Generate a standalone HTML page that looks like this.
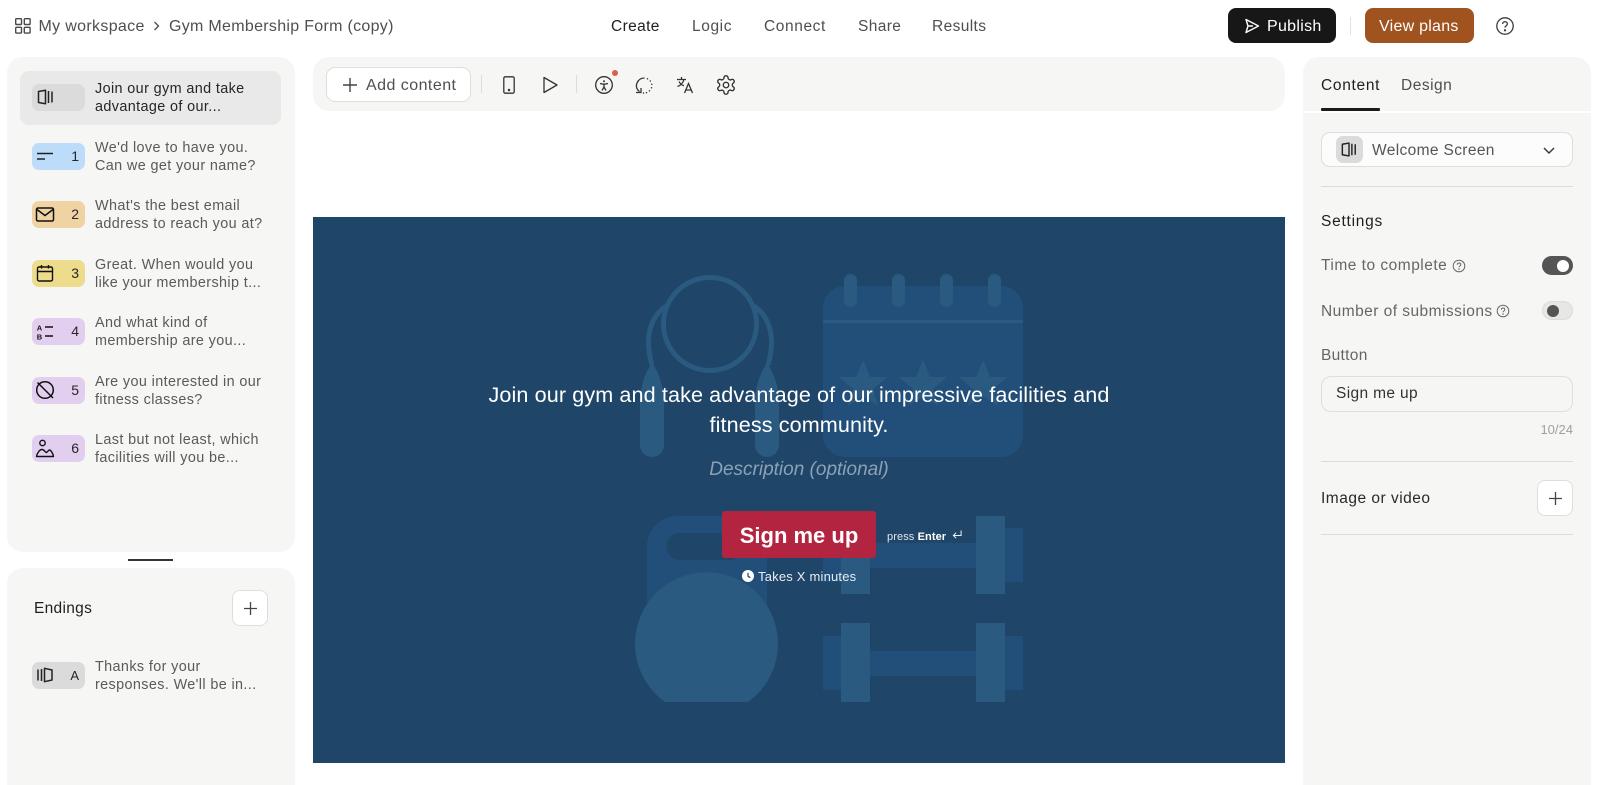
<!DOCTYPE html>
<html lang="en"><head><meta charset="utf-8"><title>Gym Membership Form</title>
<style>
*{box-sizing:border-box}
html,body{margin:0;padding:0;width:1600px;height:785px;overflow:hidden;background:#fff;font-family:"Liberation Sans",sans-serif;color:#4f4f4f}
#root{position:relative;width:1600px;height:785px;overflow:hidden}
.a{position:absolute}
.t{position:absolute;white-space:nowrap;line-height:18px}
.panel{position:absolute;background:#f6f6f5;border-radius:16px}
.badge{position:absolute;left:32px;width:53px;height:27px;border-radius:7px}
.badge svg{position:absolute;left:3px;top:2px}
.badge b{position:absolute;right:6px;top:0;line-height:27px;font-weight:400;font-size:14px;color:#262626}
.q{position:absolute;left:95px;font-size:14.4px;line-height:18px;letter-spacing:.38px;color:#5a5a5a;white-space:nowrap}
.nav{position:absolute;top:18px;font-size:15.5px;line-height:18px;letter-spacing:.38px;color:#4f4f4f;white-space:nowrap}
.btn{position:absolute;background:#fff;border:1px solid #dededc;border-radius:8px}
.hr{position:absolute;left:1321px;width:252px;height:1px;background:#dcdcda}
svg{display:block;overflow:visible}
</style></head><body><div id="root">

<svg class="a" style="left:15px;top:18px" width="16" height="16" viewBox="0 0 16 16" fill="none" stroke="#4a4a4a" stroke-width="1.4"><rect x=".7" y=".7" width="5.8" height="5.8" rx=".8"/><rect x="9.3" y=".7" width="5.8" height="5.8" rx=".8"/><rect x=".7" y="9.3" width="5.8" height="5.8" rx=".8"/><rect x="9.3" y="9.3" width="5.8" height="5.8" rx=".8"/></svg>
<div class="nav" style="left:38.5px;font-size:16px;letter-spacing:.33px">My workspace</div>
<svg class="a" style="left:153px;top:21px" width="7" height="10" viewBox="0 0 7 10" fill="none" stroke="#4a4a4a" stroke-width="1.3"><path d="M1.5 1l4 4-4 4"/></svg>
<div class="nav" style="left:169px;font-size:16px;letter-spacing:.3px">Gym Membership Form (copy)</div>

<div class="nav" style="left:611px;color:#1f1f1f">Create</div>
<div class="nav" style="left:692px;letter-spacing:.6px">Logic</div>
<div class="nav" style="left:764px;letter-spacing:.6px">Connect</div>
<div class="nav" style="left:858px">Share</div>
<div class="nav" style="left:932px">Results</div>

<div class="a" style="left:1228px;top:8px;width:108px;height:35px;background:#171717;border-radius:8px"></div>
<svg class="a" style="left:1244px;top:18px" width="16" height="16" viewBox="0 0 16 16" fill="none" stroke="#fff" stroke-width="1.4" stroke-linejoin="round"><path d="M2 1.500L14.500 8 2 14.500 4 8zM4 8h5"/></svg>
<div class="t" style="left:1267px;top:18px;font-size:16px;letter-spacing:.3px;color:#fff">Publish</div>
<div class="a" style="left:1350px;top:17px;width:1px;height:18px;background:#e2e2e0"></div>
<div class="a" style="left:1365px;top:8px;width:109px;height:35px;background:#a0521f;border-radius:8px"></div>
<div class="t" style="left:1379px;top:18px;font-size:16px;letter-spacing:.25px;color:#fff">View plans</div>
<svg class="a" style="left:1496px;top:17px" width="18" height="18" viewBox="0 0 18 18" fill="none" stroke="#3c3c3c" stroke-width="1.3"><circle cx="9" cy="9" r="8.2"/><path d="M6.600 7c0-1.400 1-2.300 2.400-2.300s2.400.9 2.400 2.200c0 1.900-2.400 1.900-2.400 3.700"/><circle cx="9" cy="13.300" r=".5" fill="#3c3c3c"/></svg>

<!-- left panel -->
<div class="panel" style="left:7px;top:57px;width:288px;height:495px"></div>
<div class="a" style="left:20px;top:71px;width:261px;height:54px;background:#e9e9e9;border-radius:9px"></div>

<div class="badge" style="top:84px;background:#dbdbdb"><svg width="22" height="22" viewBox="0 0 22 22" fill="none" stroke="#222" stroke-width="1.5"><path d="M3.500 5.500l7-1.200v13.400l-7-1.200z" stroke-linejoin="round"/><path d="M13.500 5v12M17 5.500v11"/></svg></div>
<div class="q" style="top:80px;color:#262626">Join our gym and take<br>advantage of our...</div>

<div class="badge" style="top:143px;background:#bcdcfa"><svg width="22" height="22" viewBox="0 0 22 22" fill="none" stroke="#222" stroke-width="1.4"><path d="M2 8.500h16M2 14h8"/></svg><b>1</b></div>
<div class="q" style="top:139px">We'd love to have you.<br>Can we get your name?</div>

<div class="badge" style="top:201px;background:#efd3a2"><svg width="22" height="22" viewBox="0 0 22 22" fill="none" stroke="#111" stroke-width="1.500"><rect x="1.500" y="5" width="17" height="13" rx="1.500"/><path d="M2 6.500l8 6 8-6"/></svg><b>2</b></div>
<div class="q" style="top:197px">What's the best email<br>address to reach you at?</div>

<div class="badge" style="top:260px;background:#ecdc8c"><svg width="22" height="22" viewBox="0 0 22 22" fill="none" stroke="#111" stroke-width="1.400"><rect x="2.500" y="5" width="15" height="14" rx="1.500"/><path d="M2.500 9.500h15M6.500 3v3.500M13.500 3v3.500"/></svg><b>3</b></div>
<div class="q" style="top:256px">Great. When would you<br>like your membership t...</div>

<div class="badge" style="top:318px;background:#e2cff0"><svg width="22" height="22" viewBox="0 0 22 22" fill="none" stroke="#111" stroke-width="1.400"><text x="1.800" y="10.500" font-family="Liberation Sans" font-weight="700" font-size="7.500" fill="#111" stroke="none">A</text><text x="1.800" y="19.500" font-family="Liberation Sans" font-weight="700" font-size="7.500" fill="#111" stroke="none">B</text><path d="M10 7h8M10 16h8"/></svg><b>4</b></div>
<div class="q" style="top:314px">And what kind of<br>membership are you...</div>

<div class="badge" style="top:377px;background:#e2cff0"><svg width="22" height="22" viewBox="0 0 22 22" fill="none" stroke="#111" stroke-width="1.500"><circle cx="10" cy="11" r="8.300"/><path d="M2.500 3.500l15.500 15.500"/></svg><b>5</b></div>
<div class="q" style="top:373px">Are you interested in our<br>fitness classes?</div>

<div class="badge" style="top:435px;background:#e2cff0"><svg width="22" height="22" viewBox="0 0 22 22" fill="none" stroke="#111" stroke-width="1.400" stroke-linejoin="round"><circle cx="7.500" cy="6" r="2.700"/><path d="M1.500 19.500c.5-3 3-7 5.500-7s3 3 4.500 3c1.500-1 2-2.500 3-2.500s3.500 3 4 6.500z"/></svg><b>6</b></div>
<div class="q" style="top:431px">Last but not least, which<br>facilities will you be...</div>

<div class="a" style="left:128px;top:558.500px;width:45px;height:2px;background:#333"></div>

<div class="panel" style="left:7px;top:568px;width:288px;height:240px"></div>
<div class="t" style="left:34px;top:600px;font-size:15.500px;letter-spacing:.3px;color:#1f1f1f">Endings</div>
<div class="btn" style="left:232px;top:590px;width:36px;height:36px"><svg class="a" style="left:11px;top:11px" width="13" height="13" viewBox="0 0 14 14" stroke="#444" stroke-width="1.400"><path d="M7 0v14M0 7h14"/></svg></div>
<div class="badge" style="top:662px;background:#dbdbdb"><svg width="22" height="22" viewBox="0 0 22 22" fill="none" stroke="#222" stroke-width="1.500"><path d="M3 5.500v11M6.500 5v12M9.500 4.300l7.500 1.700v10l-7.500 1.700z" stroke-linejoin="round"/></svg><b style="font-size:13px">A</b></div>
<div class="q" style="top:658px">Thanks for your<br>responses. We'll be in...</div>

<!-- toolbar -->
<div class="panel" style="left:313px;top:57px;width:972px;height:54px"></div>
<div class="btn" style="left:326px;top:67px;width:145px;height:35px;border-radius:9px"><svg class="a" style="left:16px;top:10px" width="14" height="14" viewBox="0 0 14 14" stroke="#444" stroke-width="1.400"><path d="M7 0v14M0 7h14"/></svg></div>
<div class="t" style="left:366px;top:77px;font-size:16px;letter-spacing:.46px">Add content</div>
<div class="a" style="left:481px;top:75px;width:1px;height:18px;background:#dcdcda"></div>
<div class="a" style="left:576px;top:75px;width:1px;height:18px;background:#dcdcda"></div>
<svg class="a" style="left:503px;top:76px" width="12" height="18" viewBox="0 0 12 18" fill="none" stroke="#333" stroke-width="1.300"><rect x=".8" y=".8" width="10.400" height="16.400" rx="1.500"/><circle cx="6" cy="14" r=".6" fill="#333"/></svg>
<svg class="a" style="left:543px;top:76px" width="15" height="18" viewBox="0 0 15 18" fill="none" stroke="#333" stroke-width="1.300" stroke-linejoin="round"><path d="M1 1.500l13 7.500-13 7.500z"/></svg>
<svg class="a" style="left:595px;top:76px" width="18" height="18" viewBox="0 0 18 18" fill="none" stroke="#333" stroke-width="1.300"><circle cx="9" cy="9" r="8.300"/><circle cx="9" cy="5.200" r="1" fill="#333" stroke="none"/><path d="M5 7.500l4 .8 4-.8M9 8.300v2.700M9 11l-2 3.500M9 11l2 3.500"/></svg>
<div class="a" style="left:612px;top:70px;width:6px;height:6px;border-radius:50%;background:#d9604f"></div>
<svg class="a" style="left:635px;top:76px" width="19" height="19" viewBox="0 0 19 19" fill="none" stroke="#333" stroke-width="1.300"><path d="M4.500 15.500C1.500 13.500.7 10 2 7c1.200-3 4-5 7.500-5"/><path d="M1 16.500h5V12"/><path d="M12.500 2.800h.01M15.300 5h.01M16.800 8.300h.01M16.500 11.800h.01M14.500 14.800h.01M11.500 16.600h.01M8.500 17h.01" stroke-linecap="round" stroke-width="1.500"/></svg>
<svg class="a" style="left:676px;top:76px" width="18" height="18" viewBox="0 0 18 18" fill="none" stroke="#333" stroke-width="1.300"><path d="M1 3.500h9M5.500 1v2.500M8 3.500C7 7 4.500 9.500 1.500 10.500M3 5.500c1 2 3 3.700 5 4.300"/><path d="M8.500 17L12.500 7.500 16.500 17M9.800 14h5.400"/></svg>
<svg class="a" style="left:715px;top:74px" width="22" height="22" viewBox="0 0 24 24" fill="none" stroke="#333" stroke-width="1.500"><path d="M12.220 2h-.44a2 2 0 0 0-2 2v.18a2 2 0 0 1-1 1.730l-.43.250a2 2 0 0 1-2 0l-.15-.080a2 2 0 0 0-2.730.730l-.22.380a2 2 0 0 0 .730 2.730l.150.100a2 2 0 0 1 1 1.720v.510a2 2 0 0 1-1 1.740l-.150.090a2 2 0 0 0-.730 2.730l.220.380a2 2 0 0 0 2.730.730l.150-.080a2 2 0 0 1 2 0l.430.250a2 2 0 0 1 1 1.730V20a2 2 0 0 0 2 2h.440a2 2 0 0 0 2-2v-.180a2 2 0 0 1 1-1.730l.430-.250a2 2 0 0 1 2 0l.150.080a2 2 0 0 0 2.730-.730l.220-.390a2 2 0 0 0-.730-2.730l-.150-.080a2 2 0 0 1-1-1.740v-.500a2 2 0 0 1 1-1.740l.150-.090a2 2 0 0 0 .730-2.730l-.220-.380a2 2 0 0 0-2.730-.730l-.150.080a2 2 0 0 1-2 0l-.430-.250a2 2 0 0 1-1-1.730V4a2 2 0 0 0-2-2z"/><circle cx="12" cy="12" r="3"/></svg>

<!-- canvas -->
<div class="a" style="left:313px;top:217px;width:972px;height:546px;background:#1f4568;overflow:hidden">
<svg class="a" style="left:-313px;top:-217px" width="1600" height="785" viewBox="0 0 1600 785" fill="none">
  <g stroke="#2a5a80" stroke-width="5">
    <circle cx="710" cy="324" r="46.500"/>
    <path d="M666 306C654 314 648.500 328 648.500 342C648.500 350 650 358 652 365M754 306C766 314 771.500 328 771.500 342C771.500 350 770 358 768 365"/>
  </g>
  <path d="M652 363c7 10 12 24 12 38v44a12 12 0 0 1-24 0v-44c0-14 5-28 12-38zM767 363c7 10 12 24 12 38v44a12 12 0 0 1-24 0v-44c0-14 5-28 12-38z" fill="#2a5a80"/>
  <rect x="823" y="286" width="200" height="171" rx="22" fill="#214f7a"/>
  <rect x="823" y="320" width="200" height="3" fill="#2a5a80"/>
  <g fill="#2a5a80"><rect x="844" y="274" width="13" height="33" rx="6.500"/><rect x="892" y="274" width="13" height="33" rx="6.500"/><rect x="940" y="274" width="13" height="33" rx="6.500"/><rect x="988" y="274" width="13" height="33" rx="6.500"/>
    <path d="M863 360l7 17h17l-14 12 5 17-15-10-15 10 5-17-14-12h17z"/>
    <path d="M923 360l7 17h17l-14 12 5 17-15-10-15 10 5-17-14-12h17z"/>
    <path d="M983 360l7 17h17l-14 12 5 17-15-10-15 10 5-17-14-12h17z"/></g>
  <path fill-rule="evenodd" d="M647 546a30 30 0 0 1 30-30h60a30 30 0 0 1 30 30v110h-120zM680 533a13.500 13.500 0 0 0 0 27h50a13.500 13.500 0 0 0 0-27z" fill="#214f7a"/>
  <path d="M665 702a71.500 71.500 0 1 1 83 0z" fill="#2a5a80"/>
  <g fill="#214f7a"><rect x="823" y="528" width="18" height="54"/><rect x="1005" y="528" width="18" height="54"/><rect x="823" y="636" width="18" height="54"/><rect x="1005" y="636" width="18" height="54"/><rect x="870" y="543" width="106" height="25"/><rect x="870" y="651" width="106" height="25"/></g>
  <g fill="#2a5a80"><rect x="841" y="516" width="29" height="78"/><rect x="976" y="516" width="29" height="78"/><rect x="841" y="623" width="29" height="79"/><rect x="976" y="623" width="29" height="79"/></g>
</svg>
</div>
<div class="a" style="left:313px;top:380px;width:972px;text-align:center;font-size:21.600px;line-height:30px;letter-spacing:.1px;color:#fff">Join our gym and take advantage of our impressive facilities and<br>fitness community.</div>
<div class="a" style="left:313px;top:459px;width:972px;text-align:center;font-size:19px;line-height:22px;font-style:italic;color:#8ba2b6">Description (optional)</div>
<div class="a" style="left:722px;top:511px;width:154px;height:47px;background:#b2243f;border-radius:3px;text-align:center;font-size:22px;font-weight:700;line-height:50px;color:#fff">Sign me up</div>
<div class="t" style="left:887px;top:528px;font-size:11px;letter-spacing:.1px;color:#dfe6ec">press <b style="color:#fff">Enter</b></div>
<svg class="a" style="left:952px;top:530px" width="10" height="10" viewBox="0 0 11 10" fill="none" stroke="#eef2f5" stroke-width="1.100"><path d="M10 0v5.500H1.500M4.500 2.500l-3 3 3 3"/></svg>
<svg class="a" style="left:742px;top:570px" width="12" height="12" viewBox="0 0 12 12"><circle cx="6" cy="6" r="6" fill="#fff"/><path d="M6 2.800V6.300l2.400 1.400" stroke="#1f4568" stroke-width="1.200" fill="none"/></svg>
<div class="t" style="left:758px;top:568px;font-size:13px;letter-spacing:.2px;color:#e8edf1">Takes X minutes</div>

<!-- right panel -->
<div class="panel" style="left:1303px;top:57px;width:288px;height:760px"></div>
<div class="a" style="left:1303px;top:111px;width:288px;height:2px;background:#fff"></div>
<div class="t" style="left:1321px;top:77px;font-size:15.500px;letter-spacing:.7px;color:#1f1f1f">Content</div>
<div class="t" style="left:1401px;top:77px;font-size:15.500px;letter-spacing:.5px">Design</div>
<div class="a" style="left:1321px;top:108px;width:59px;height:2.500px;background:#1a1a1a;border-radius:1px"></div>

<div class="btn" style="left:1321px;top:132px;width:252px;height:35px;border-radius:9px;background:#fcfcfc"></div>
<div class="a" style="left:1336px;top:136px;width:26.500px;height:27px;border-radius:7px;background:#dbdbdb"><svg class="a" style="left:3px;top:3px" width="21" height="21" viewBox="0 0 22 22" fill="none" stroke="#222" stroke-width="1.500"><path d="M3.500 5.500l7-1.200v13.400l-7-1.200z" stroke-linejoin="round"/><path d="M13.500 5v12M17 5.500v11"/></svg></div>
<div class="t" style="left:1372px;top:142px;font-size:15.500px;letter-spacing:.36px;color:#555">Welcome Screen</div>
<svg class="a" style="left:1543px;top:147px" width="12" height="7" viewBox="0 0 12 7" fill="none" stroke="#333" stroke-width="1.400"><path d="M1 1l5 5 5-5"/></svg>
<div class="hr" style="top:186px"></div>

<div class="t" style="left:1321px;top:213px;font-size:15.500px;letter-spacing:.75px;color:#1f1f1f">Settings</div>
<div class="t" style="left:1321px;top:257px;font-size:15.500px;letter-spacing:.5px;color:#666">Time to complete</div>
<svg class="a" style="left:1452px;top:259px" width="14" height="14" viewBox="0 0 14 14" fill="none" stroke="#666" stroke-width="1"><circle cx="7" cy="7" r="5.800"/><path d="M5.300 5.700c0-2.200 3.500-2.200 3.500 0 0 1.300-1.800 1.300-1.800 2.500"/><circle cx="7" cy="10" r=".3"/></svg>
<div class="a" style="left:1542px;top:256px;width:31px;height:19px;border-radius:10px;background:#555"><div class="a" style="right:4px;top:3.500px;width:12px;height:12px;border-radius:50%;background:#fff"></div></div>
<div class="t" style="left:1321px;top:303px;font-size:15.500px;letter-spacing:.46px;color:#666">Number of submissions</div>
<svg class="a" style="left:1496px;top:304px" width="14" height="14" viewBox="0 0 14 14" fill="none" stroke="#666" stroke-width="1"><circle cx="7" cy="7" r="5.800"/><path d="M5.300 5.700c0-2.200 3.500-2.200 3.500 0 0 1.300-1.800 1.300-1.800 2.500"/><circle cx="7" cy="10" r=".3"/></svg>
<div class="a" style="left:1542px;top:301px;width:31px;height:19px;border-radius:10px;background:#e7e7e5;border:1px solid #dcdcda"><div class="a" style="left:4px;top:2.500px;width:12px;height:12px;border-radius:50%;background:#555"></div></div>
<div class="t" style="left:1321px;top:347px;font-size:15.500px;letter-spacing:.3px;color:#666">Button</div>
<div class="btn" style="left:1321px;top:376px;width:252px;height:36px;border-radius:10px;background:#f6f6f5"></div>
<div class="t" style="left:1336px;top:385px;font-size:15.500px;letter-spacing:.35px;color:#333">Sign me up</div>
<div class="t" style="left:1472px;width:101px;top:421px;text-align:right;font-size:13px;color:#a0a0a0">10/24</div>
<div class="hr" style="top:461px"></div>
<div class="t" style="left:1321px;top:490px;font-size:15.500px;letter-spacing:.5px;color:#2a2a2a">Image or video</div>
<div class="btn" style="left:1537px;top:480px;width:36px;height:36px"><svg class="a" style="left:11px;top:11px" width="13" height="13" viewBox="0 0 14 14" stroke="#444" stroke-width="1.400"><path d="M7 0v14M0 7h14"/></svg></div>
<div class="hr" style="top:534px"></div>
</div></body></html>
